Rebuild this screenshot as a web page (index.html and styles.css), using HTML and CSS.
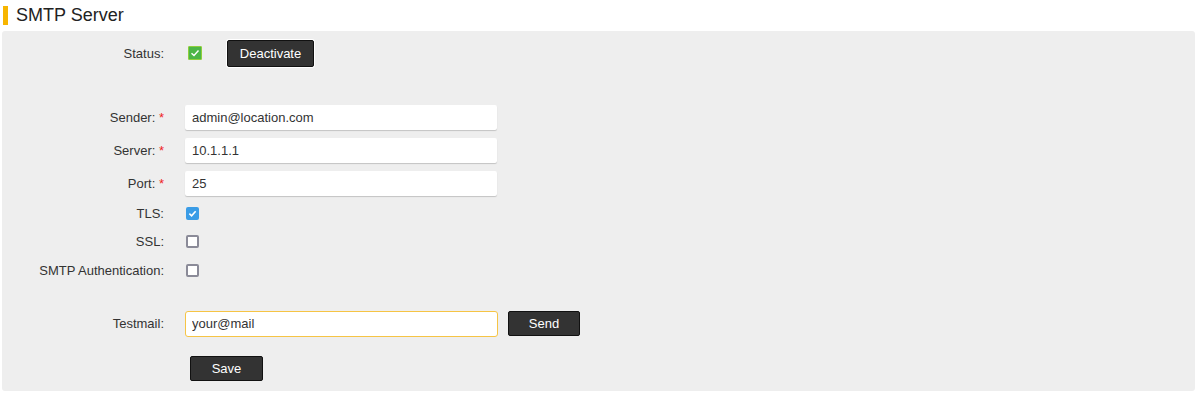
FILE: index.html
```html
<!DOCTYPE html>
<html lang="en">
<head>
  <meta charset="UTF-8">
  <title>SMTP Server</title>
  <link rel="stylesheet" href="styles.css">
</head>
<body>
  <h2 class="title">SMTP Server</h2>

  <div class="panel">
    <div class="row row-status">
      <label class="label">Status:</label>
      <div class="value">
        <span class="cb cb-green">
          <svg width="10" height="10" viewBox="0 0 10 10"><path d="M1.5 5.2 L4 7.5 L8.5 2.5" fill="none" stroke="#fff" stroke-width="1.4"/></svg>
        </span>
        <button class="btn btn-deactivate">Deactivate</button>
      </div>
    </div>

    <div class="row row-field row-sender">
      <label class="label">Sender: <span class="req">*</span></label>
      <div class="value"><input type="text" class="field" value="admin@location.com"></div>
    </div>
    <div class="row row-field">
      <label class="label">Server: <span class="req">*</span></label>
      <div class="value"><input type="text" class="field" value="10.1.1.1"></div>
    </div>
    <div class="row row-field row-port">
      <label class="label">Port: <span class="req">*</span></label>
      <div class="value"><input type="text" class="field" value="25"></div>
    </div>

    <div class="row row-check">
      <label class="label">TLS:</label>
      <div class="value">
        <span class="cb cb-blue">
          <svg width="9" height="9" viewBox="0 0 10 10"><path d="M1.5 5.2 L4 7.5 L8.5 2.5" fill="none" stroke="#fff" stroke-width="1.8"/></svg>
        </span>
      </div>
    </div>
    <div class="row row-check">
      <label class="label">SSL:</label>
      <div class="value"><span class="cb cb-empty"></span></div>
    </div>
    <div class="row row-check">
      <label class="label">SMTP Authentication:</label>
      <div class="value"><span class="cb cb-empty"></span></div>
    </div>

    <div class="row row-test">
      <label class="label">Testmail:</label>
      <div class="value">
        <input type="text" class="field field-focus" value="your@mail">
        <button class="btn btn-send">Send</button>
      </div>
    </div>

    <div class="row row-save">
      <div class="label"></div>
      <div class="value"><button class="btn btn-save">Save</button></div>
    </div>
  </div>
</body>
</html>
```

FILE: styles.css
```css
body {
  margin: 0;
  padding: 0 5px 0 2px;
  font-family: "Liberation Sans", Arial, sans-serif;
  color: #333;
  background: #fff;
}

.title {
  margin: 6px 0 6px 1px;
  padding-left: 8px;
  border-left: 5px solid #f7b500;
  font-size: 18px;
  font-weight: normal;
  line-height: 19px;
  color: #222;
}

.panel {
  background-color: #eeeeee;
  border-radius: 3px;
  padding: 9px 0 10px 0;
}

.row {
  display: flex;
  align-items: center;
}

.label {
  width: 162px;
  text-align: right;
  font-size: 13px;
  flex-shrink: 0;
}

.value {
  display: flex;
  align-items: center;
  margin-left: 21px;
}

.req {
  color: #e22;
  font-size: 13px;
}

.row-status {
  height: 26px;
}

.row-field {
  height: 25px;
  margin-bottom: 8px;
}

.row-sender {
  margin-top: 39px;
}

.row-port {
  margin-bottom: 3px;
}

.row-check {
  height: 28.5px;
}

.row-test {
  height: 26px;
  margin-top: 26px;
}

.row-save {
  height: 25px;
  margin-top: 19px;
}

.field {
  width: 312px;
  height: 25px;
  box-sizing: border-box;
  border: none;
  border-radius: 2px;
  background: #fff;
  box-shadow: 0 1px 1px rgba(0, 0, 0, 0.18);
  padding: 0 7px;
  font-family: "Liberation Sans", Arial, sans-serif;
  font-size: 13px;
  color: #333;
  outline: none;
}

.field-focus {
  width: 313px;
  height: 26px;
  border: 1px solid #f6c445;
  border-radius: 3px;
  padding: 0 6px;
  box-shadow: none;
}

.cb {
  display: inline-flex;
  align-items: center;
  justify-content: center;
  box-sizing: border-box;
  width: 13px;
  height: 13px;
  border-radius: 2px;
}

.cb-green {
  width: 14px;
  height: 14px;
  margin-left: 3px;
  background-color: #4cb646;
  border: 1px solid #8fcf3c;
  border-radius: 1px;
}

.cb-blue {
  margin-left: 1px;
  background-color: #3a9ce6;
}

.cb-empty {
  margin-left: 1px;
  background-color: #fff;
  border: 2px solid #8b8b98;
}

.btn {
  box-sizing: border-box;
  height: 25px;
  background-color: #333;
  border: 1px solid #111;
  border-radius: 2px;
  color: #fff;
  font-family: "Liberation Sans", Arial, sans-serif;
  font-size: 13px;
  cursor: pointer;
  padding: 0;
}

.btn-deactivate {
  width: 87px;
  height: 27px;
  margin-left: 25px;
  box-shadow: 0 0 0 1px #fff;
}

.btn-send {
  width: 72px;
  margin-left: 10px;
}

.btn-save {
  width: 73px;
  margin-left: 5px;
}
```
